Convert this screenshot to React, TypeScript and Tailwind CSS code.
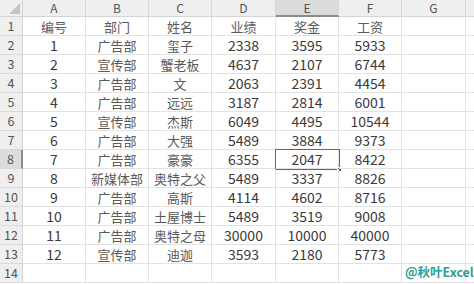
import React from "react";

const cols = ["A", "B", "C", "D", "E", "F", "G", ""];

const rows: string[][] = [
  ["编号", "部门", "姓名", "业绩", "奖金", "工资"],
  ["1", "广告部", "玺子", "2338", "3595", "5933"],
  ["2", "宣传部", "蟹老板", "4637", "2107", "6744"],
  ["3", "广告部", "文", "2063", "2391", "4454"],
  ["4", "广告部", "远远", "3187", "2814", "6001"],
  ["5", "宣传部", "杰斯", "6049", "4495", "10544"],
  ["6", "广告部", "大强", "5489", "3884", "9373"],
  ["7", "广告部", "豪豪", "6355", "2047", "8422"],
  ["8", "新媒体部", "奥特之父", "5489", "3337", "8826"],
  ["9", "广告部", "高斯", "4114", "4602", "8716"],
  ["10", "广告部", "土屋博士", "5489", "3519", "9008"],
  ["11", "广告部", "奥特之母", "30000", "10000", "40000"],
  ["12", "宣传部", "迪迦", "3593", "2180", "5773"],
  [],
];

const font = { fontFamily: '"Noto Sans CJK SC", "Noto Sans", sans-serif' };

export default function App() {
  return (
    <div className="relative w-[474px] h-[284px] overflow-hidden bg-white" style={font}>
      <div className="grid grid-cols-[23px_63px_63px_63px_64px_63px_63px_64px_40px] grid-rows-[17px_repeat(14,19px)]">
        {/* corner */}
        <div className="relative bg-[#efefef] border-r border-b border-[#d4d4d4]">
          <div className="absolute right-[2px] bottom-[2px] w-0 h-0 border-l-[11px] border-l-transparent border-b-[11px] border-b-[#c4c4c4]" />
        </div>
        {cols.map((c, i) => (
          <div
            key={i}
            className={
              "flex items-center justify-center text-[12px] leading-none text-[#555] border-r border-[#d9d9d9] " +
              (c === "E" ? "bg-[#dcdcdc] border-b-2 border-b-[#8a8a8a]" : "bg-[#efefef] border-b border-b-[#d4d4d4]")
            }
          >
            {c}
          </div>
        ))}
        {rows.map((r, ri) => (
          <React.Fragment key={ri}>
            <div
              className={
                "flex items-center justify-center text-[12.5px] leading-none text-[#555] border-b border-[#d9d9d9] " +
                (ri === 7 ? "bg-[#dcdcdc] border-r-2 border-r-[#8a8a8a]" : "bg-[#efefef] border-r border-r-[#d4d4d4]")
              }
            >
              {ri + 1}
            </div>
            {cols.map((_, ci) => {
              const v = r[ci] ?? "";
              const isNum = /^\d+$/.test(v);
              const sel = ri === 7 && ci === 4;
              return (
                <div
                  key={ci}
                  className={
                    "relative flex items-center justify-center leading-none border-r border-b border-[#e2e2e2] " +
                    (isNum ? "text-[14px] text-[#3a3a3a]" : "text-[13px] text-[#5a5a5a]")
                  }
                >
                  {v}
                  {sel && (
                    <div className="absolute -left-px -top-px w-[65px] h-[21px] border-[1.5px] border-[#666]">
                      <div className="absolute -right-[3px] -bottom-[3px] w-[5px] h-[5px] bg-[#555] border border-white" />
                    </div>
                  )}
                </div>
              );
            })}
          </React.Fragment>
        ))}
      </div>
      <div className="absolute left-[405px] top-[266px] text-[12.5px] font-bold leading-none text-[#2f9e93] whitespace-nowrap">
        @秋叶Excel
      </div>
    </div>
  );
}
